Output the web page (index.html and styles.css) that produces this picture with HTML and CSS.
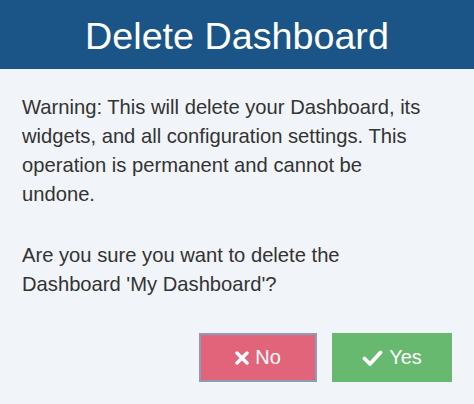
FILE: index.html
```html
<!DOCTYPE html>
<html>
<head>
<meta charset="utf-8">
<link rel="stylesheet" href="styles.css">
</head>
<body>
<div class="dialog">
  <div class="header"><h1 class="title">Delete Dashboard</h1></div>
  <div class="content">
    <p class="msg">Warning: This will delete your Dashboard, its widgets, and all configuration settings. This operation is permanent and cannot be undone.</p>
    <p class="msg second">Are you sure you want to delete the Dashboard 'My Dashboard'?</p>
    <div class="actions">
      <button class="btn btn-no"><svg class="ico" width="14" height="14" viewBox="0 0 14 14"><path d="M2 2 L12 12 M12 2 L2 12" stroke="#fff" stroke-width="3.4" stroke-linecap="round"/></svg>No</button>
      <button class="btn btn-yes"><svg class="ico chk" width="21" height="16" viewBox="0 0 21 16"><path d="M2.5 8.5 L8 14 L18.5 2.5" fill="none" stroke="#fff" stroke-width="3.8" stroke-linecap="round" stroke-linejoin="round"/></svg>Yes</button>
    </div>
  </div>
</div>
</body>
</html>
```
FILE: styles.css
```css
html, body {
  margin: 0;
  padding: 0;
}
body {
  width: 474px;
  height: 404px;
  background: #f1f4f8;
  font-family: "Liberation Sans", Arial, sans-serif;
  overflow: hidden;
}
.dialog {
  display: flex;
  flex-direction: column;
}
.header {
  background: #1b5587;
  height: 69px;
  display: flex;
  align-items: center;
  justify-content: center;
}
.title {
  margin: 0;
  color: #fff;
  font-weight: normal;
  font-size: 37.7px;
  line-height: 40px;
  padding-top: 2px;
}
.content {
  padding: 24px 22px 0 22px;
}
.msg {
  margin: 0;
  max-width: 412px;
  font-size: 20.2px;
  line-height: 29px;
  color: #333;
}
.second {
  margin-top: 32px;
}
.actions {
  display: flex;
  justify-content: flex-end;
  gap: 15px;
  margin-top: 34px;
}
.btn {
  width: 119px;
  height: 49px;
  border: 0;
  font-family: "Liberation Sans", Arial, sans-serif;
  font-size: 20px;
  color: #fff;
  display: flex;
  align-items: center;
  justify-content: center;
  gap: 6px;
  padding: 0;
}
.btn-no {
  background: #e2647a;
  border: 2px solid #8d9bb7;
  width: 118px;
}
.btn-yes {
  background: #67b96f;
  width: 120px;
}
.ico {
  display: block;
}
```
